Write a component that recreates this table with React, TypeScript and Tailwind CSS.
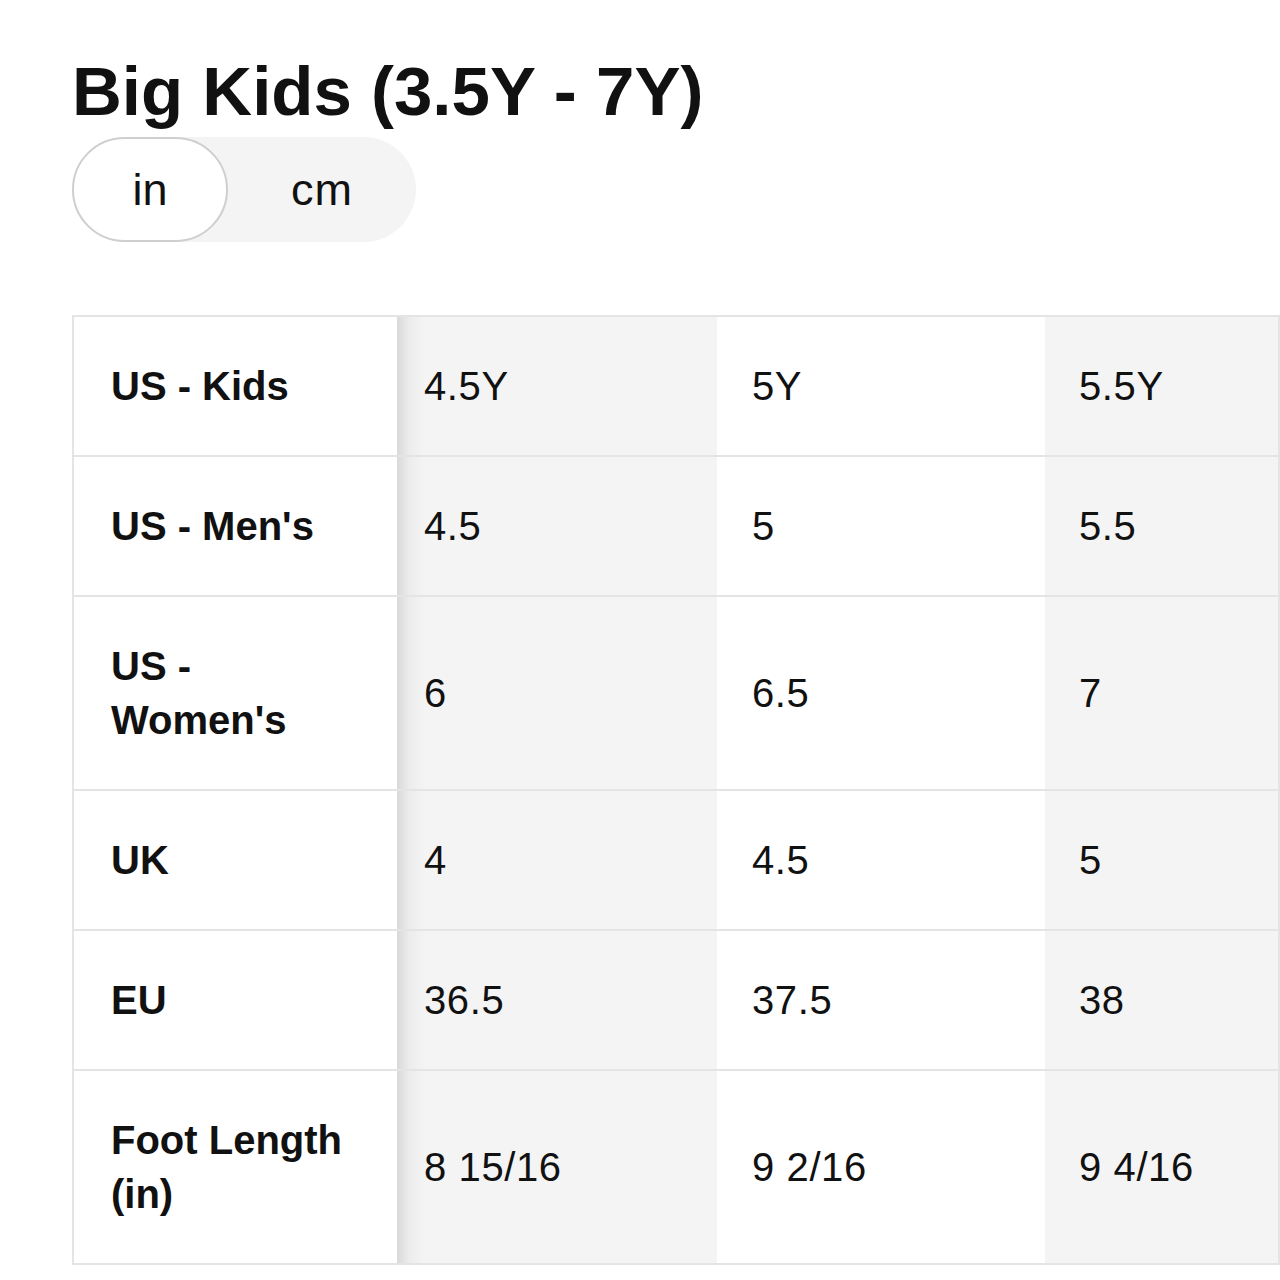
const rows = [
  { label: "US - Kids", values: ["4.5Y", "5Y", "5.5Y"] },
  { label: "US - Men's", values: ["4.5", "5", "5.5"] },
  { label: "US - Women's", values: ["6", "6.5", "7"] },
  { label: "UK", values: ["4", "4.5", "5"] },
  { label: "EU", values: ["36.5", "37.5", "38"] },
  { label: "Foot Length (in)", values: ["8 15/16", "9 2/16", "9 4/16"] },
]

export default function App() {
  return (
    <div className="min-h-[1280px] bg-white pl-[72px] pt-[48px] font-['Liberation_Sans',Arial,sans-serif] text-[#111]">
      <h1 className="text-[69px] font-bold leading-[88px]">Big Kids (3.5Y - 7Y)</h1>

      {/* unit toggle */}
      <div className="mt-[1px] flex h-[105px] w-[344px] rounded-full bg-[#f4f4f4]">
        <button className="h-full w-[156px] rounded-full border-2 border-[#cfcfcf] bg-white text-[45px] leading-none">
          in
        </button>
        <button className="h-full flex-1 text-[45px] leading-none tracking-[1px]">cm</button>
      </div>

      <div className="mt-[73px] w-[1206px]">
        <table className="w-full table-fixed border-collapse border-2 border-[#e4e4e4]">
          <colgroup>
            <col className="w-[324px]" />
            <col className="w-[320px]" />
            <col className="w-[328px]" />
            <col className="w-[234px]" />
          </colgroup>
          <tbody>
            {rows.map((row) => (
              <tr key={row.label} className="border-b-2 border-[#e4e4e4]">
                <td className="py-[42px] pl-[37px] pr-[36px] align-middle text-[40px] font-bold leading-[54px]">
                  {row.label}
                </td>
                <td className="bg-[linear-gradient(to_right,#d9d9d9,#ececec_12px,#f4f4f4_28px)] pl-[27px] align-middle text-[40px] leading-[54px] tracking-[0.6px]">
                  {row.values[0]}
                </td>
                <td className="bg-white pl-[35px] align-middle text-[40px] leading-[54px] tracking-[0.6px]">
                  {row.values[1]}
                </td>
                <td className="bg-[#f4f4f4] pl-[34px] align-middle text-[40px] leading-[54px] tracking-[0.6px]">
                  {row.values[2]}
                </td>
              </tr>
            ))}
          </tbody>
        </table>
      </div>
    </div>
  )
}
